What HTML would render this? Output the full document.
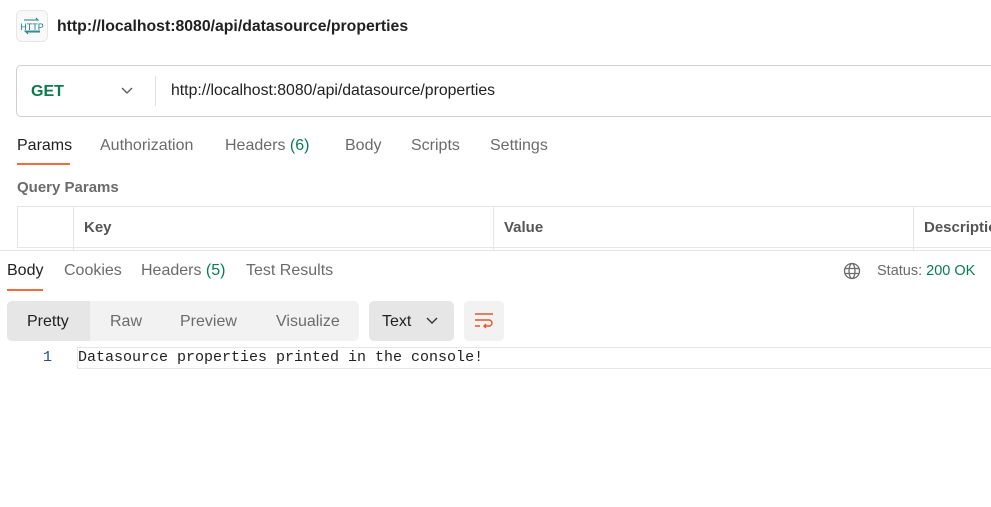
<!DOCTYPE html>
<html><head><meta charset="utf-8"><style>
*{margin:0;padding:0;box-sizing:border-box}
body{width:991px;height:507px;background:#fff;font-family:"Liberation Sans",sans-serif;position:relative;overflow:hidden;color:#212121}
.a{position:absolute;white-space:nowrap}
.g{color:#6b6b6b}
.t{font-size:16px}
</style></head><body>
<div class="a" style="left:16px;top:10px;width:32px;height:32px;border:1px solid #e6e6e6;border-radius:6px;background:#f9f9f9">
<svg width="30" height="30" viewBox="0 0 30 30"><text x="15" y="19" font-family="Liberation Sans" font-size="9" fill="#1a7f8a" text-anchor="middle">HTTP</text><path d="M7 9h14l-2-2M23 21H9l2 2" stroke="#1a7f8a" stroke-width="1" fill="none"/><line x1="7" y1="20" x2="23" y2="20" stroke="#1a7f8a" stroke-width="0.8"/></svg></div>
<div class="a" style="left:57px;top:18px;font-size:15.8px;font-weight:bold;color:#212121">http://localhost:8080/api/datasource/properties</div>
<div class="a" style="left:16px;top:65px;width:990px;height:52px;border:1px solid #cfcfcf;border-radius:5px"></div>
<div class="a" style="left:31px;top:83px;font-size:16px;font-weight:bold;color:#0b7a4f">GET</div>
<svg class="a" style="left:120px;top:86px" width="14" height="10"><path d="M2 2l5 5 5-5" stroke="#555" stroke-width="1.3" fill="none"/></svg>
<div class="a" style="left:155px;top:76px;width:1px;height:30px;background:#e0e0e0"></div>
<div class="a" style="left:171px;top:82px;font-size:15.8px;color:#212121">http://localhost:8080/api/datasource/properties</div>
<div class="a t" style="left:17px;top:137px;color:#212121">Params</div>
<div class="a" style="left:17px;top:163px;width:53px;height:2px;background:#f26b3a"></div>
<div class="a g t" style="left:100px;top:137px">Authorization</div>
<div class="a g t" style="left:225px;top:137px">Headers <span style="color:#0b7a4f">(6)</span></div>
<div class="a g t" style="left:345px;top:137px">Body</div>
<div class="a g t" style="left:411px;top:137px">Scripts</div>
<div class="a g t" style="left:490px;top:137px">Settings</div>
<div class="a" style="left:17px;top:179px;font-size:15px;font-weight:bold;color:#6b6b6b">Query Params</div>
<div class="a" style="left:17px;top:206px;width:980px;height:42px;border-top:1px solid #e6e6e6;border-left:1px solid #e6e6e6;border-bottom:1px solid #e6e6e6"></div>
<div class="a" style="left:73px;top:206px;width:1px;height:44px;background:#e6e6e6"></div>
<div class="a" style="left:493px;top:206px;width:1px;height:44px;background:#e6e6e6"></div>
<div class="a" style="left:913px;top:206px;width:1px;height:44px;background:#e6e6e6"></div>
<div class="a" style="left:84px;top:219px;font-size:15px;font-weight:bold;color:#555">Key</div>
<div class="a" style="left:504px;top:219px;font-size:15px;font-weight:bold;color:#555">Value</div>
<div class="a" style="left:924px;top:219px;font-size:15px;font-weight:bold;color:#555">Description</div>
<div class="a" style="left:0;top:250px;width:991px;height:1px;background:#e6e6e6"></div>
<div class="a t" style="left:7px;top:262px;color:#212121">Body</div>
<div class="a" style="left:7px;top:289px;width:36px;height:2px;background:#f26b3a"></div>
<div class="a g t" style="left:64px;top:262px">Cookies</div>
<div class="a g t" style="left:141px;top:262px">Headers <span style="color:#0b7a4f">(5)</span></div>
<div class="a g t" style="left:246px;top:262px">Test Results</div>
<svg class="a" style="left:843px;top:262px" width="18" height="18" viewBox="0 0 18 18" fill="none" stroke="#6b6b6b" stroke-width="1.3"><circle cx="9" cy="9" r="7.5"/><ellipse cx="9" cy="9" rx="3" ry="7.5"/><path d="M2 6.5h14M2 11.5h14"/></svg>
<div class="a g" style="left:877px;top:263px;font-size:14.5px">Status: <span style="color:#0b7a4f">200 OK</span></div>
<div class="a" style="left:7px;top:301px;width:352px;height:40px;background:#f2f2f2;border-radius:5px"></div>
<div class="a" style="left:7px;top:301px;width:83px;height:40px;background:#e6e6e6;border-radius:5px 0 0 5px"></div>
<div class="a t" style="left:27px;top:313px;color:#212121">Pretty</div>
<div class="a g t" style="left:110px;top:313px">Raw</div>
<div class="a g t" style="left:180px;top:313px">Preview</div>
<div class="a g t" style="left:276px;top:313px">Visualize</div>
<div class="a" style="left:369px;top:301px;width:85px;height:40px;background:#e6e6e6;border-radius:5px"></div>
<div class="a t" style="left:382px;top:313px;color:#212121">Text</div>
<svg class="a" style="left:425px;top:316px" width="14" height="10"><path d="M2 2l5 5 5-5" stroke="#333" stroke-width="1.4" fill="none"/></svg>
<div class="a" style="left:464px;top:301px;width:40px;height:40px;background:#f2f2f2;border-radius:5px"></div>
<svg class="a" style="left:474px;top:311px" width="20" height="20" viewBox="0 0 20 20" fill="none" stroke="#e8542a" stroke-width="1.4"><path d="M1 3h18M1 9h14a3 3 0 0 1 0 6h-5M12 13l-2 2 2 2M1 15h5"/></svg>
<div class="a" style="left:77px;top:347px;width:920px;height:22px;border:1px solid #e6e6e6"></div>
<div class="a" style="left:43px;top:349px;font-family:'Liberation Mono',monospace;font-size:15px;color:#2a4a8a">1</div>
<div class="a" style="left:78px;top:349px;font-family:'Liberation Mono',monospace;font-size:15px;color:#212121">Datasource properties printed in the console!</div>
</body></html>
